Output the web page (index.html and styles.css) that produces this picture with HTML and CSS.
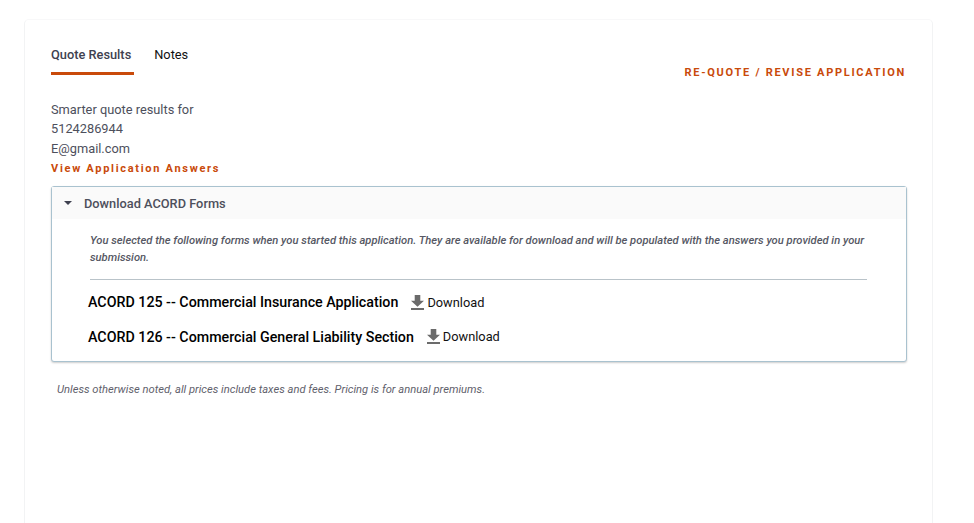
FILE: index.html
```html
<!DOCTYPE html>
<html lang="en">
<head>
  <meta charset="UTF-8">
  <meta name="viewport" content="width=device-width, initial-scale=1.0">
  <title>Quote Results</title>
  <link rel="stylesheet" href="styles.css">
</head>
<body>
  <div class="page-card">
    <div class="top-row">
      <div class="tabs">
        <div class="tab active">Quote Results</div>
        <div class="tab">Notes</div>
      </div>
      <a class="requote" href="#">RE-QUOTE / REVISE APPLICATION</a>
    </div>

    <div class="summary">
      <div>Smarter quote results for</div>
      <div>5124286944</div>
      <div>E@gmail.com</div>
    </div>
    <a class="view-answers" href="#">View Application Answers</a>

    <div class="panel">
      <div class="panel-header">
        <span class="caret"></span>
        <span class="panel-title">Download ACORD Forms</span>
      </div>
      <div class="panel-body">
        <p class="panel-note">You selected the following forms when you started this application. They are available for download and will be populated with the answers you provided in your submission.</p>
        <hr class="divider">
        <div class="form-row">
          <span class="form-name">ACORD 125 -- Commercial Insurance Application</span>
          <a class="download" href="#">
            <svg class="download-icon" viewBox="0 0 14 16"><path d="M4 0h6v6h4L7 12.5 0 6h4zM0 14h14v2H0z"/></svg>
            Download
          </a>
        </div>
        <div class="form-row">
          <span class="form-name">ACORD 126 -- Commercial General Liability Section</span>
          <a class="download" href="#">
            <svg class="download-icon" viewBox="0 0 14 16"><path d="M4 0h6v6h4L7 12.5 0 6h4zM0 14h14v2H0z"/></svg>
            Download
          </a>
        </div>
      </div>
    </div>

    <p class="footnote">Unless otherwise noted, all prices include taxes and fees. Pricing is for annual premiums.</p>
  </div>
</body>
</html>
```

FILE: styles.css
```css
* {
  box-sizing: border-box;
}

html, body {
  height: 100%;
}

body {
  margin: 0;
  overflow: hidden;
  background-color: #fff;
  font-family: Roboto, "Liberation Sans", sans-serif;
  font-size: 14px;
  color: #4d4f5c;
}

a {
  text-decoration: none;
}

.page-card {
  width: 909px;
  height: calc(100% - 19px);
  margin: 19px 0 0 24px;
  padding: 0 25px 0 26px;
  background: #fff;
  border: 1px solid #f2f3f4;
  border-top-color: #f8f8f9;
  border-bottom: 0;
  border-radius: 5px 5px 0 0;
}

.top-row {
  display: flex;
  justify-content: space-between;
  height: 55px;
}

.tabs {
  display: flex;
  gap: 20px;
  padding-top: 26px;
}

.tab {
  height: 29px;
  padding-right: 3px;
  font-size: 12.8px;
  line-height: 18px;
  color: #111;
}

.tab.active {
  font-weight: 500;
  color: #3e4150;
  border-bottom: 3px solid #c94a0a;
}

.requote {
  margin-top: 45px;
  margin-right: 1px;
  font-size: 11px;
  line-height: 16px;
  font-weight: 700;
  letter-spacing: 1.72px;
  color: #c94a0a;
}

.summary {
  margin-top: 25px;
  font-size: 12.8px;
  line-height: 19.4px;
}

.view-answers {
  display: block;
  margin-top: 3px;
  font-size: 11px;
  line-height: 16px;
  font-weight: 700;
  letter-spacing: 1.7px;
  color: #c94a0a;
}

.panel {
  width: 856px;
  height: 176px;
  margin-top: 9px;
  background: #fff;
  border: 1px solid #a9c2cf;
  border-radius: 3px;
  box-shadow: 0 1px 2px rgba(0, 0, 0, 0.2);
}

.panel-header {
  display: flex;
  align-items: center;
  height: 32px;
  padding-left: 12px;
  background: #fafafa;
}

.caret {
  width: 0;
  height: 0;
  margin-right: 12px;
  border-left: 4px solid transparent;
  border-right: 4px solid transparent;
  border-top: 4px solid #3e4150;
}

.panel-title {
  font-size: 12.8px;
  font-weight: 500;
  color: #4d4f5c;
}

.panel-body {
  padding: 13px 39px 0 36px;
}

.panel-note {
  margin: 0 0 0 2px;
  font-size: 11.2px;
  line-height: 17px;
  font-style: italic;
  font-weight: 500;
  color: #565864;
}

.divider {
  height: 1px;
  margin: 13px 0 0 2px;
  border: 0;
  background: #b9c3c9;
}

.form-row {
  display: flex;
  align-items: center;
  height: 35px;
}

.form-row:first-of-type {
  margin-top: 4px;
}

.form-row:first-of-type .download {
  margin-top: 2px;
}

.form-name {
  font-size: 14.25px;
  font-weight: 500;
  color: #000;
}

.download {
  display: flex;
  align-items: center;
  gap: 3px;
  margin-left: 13px;
  font-size: 12.8px;
  color: #111;
}

.download-icon {
  width: 13px;
  height: 15px;
  fill: #6b6b6b;
}

.footnote {
  margin: 21px 0 0 6px;
  font-size: 11.2px;
  line-height: 14px;
  font-style: italic;
  color: #5f616c;
}
```
